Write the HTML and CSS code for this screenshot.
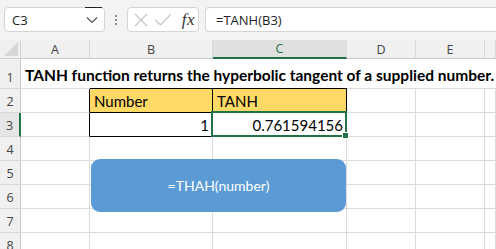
FILE: index.html
```html
<!DOCTYPE html>
<html>
<head>
<meta charset="utf-8">
<link rel="stylesheet" href="styles.css">
</head>
<body>
<div class="toolbar">
  <div class="namebox">
    <span class="ref">C3</span>
    <svg class="chev" width="12" height="8" viewBox="0 0 12 8"><path d="M1 1.5 L6 6.5 L11 1.5" fill="none" stroke="#555" stroke-width="1.2"/></svg>
  </div>
  <div class="dots"><i></i><i></i><i></i></div>
  <div class="fxbox">
    <svg class="ic" width="16" height="16" viewBox="0 0 16 16"><path d="M2 2 L14 14 M14 2 L2 14" stroke="#c4c4c4" stroke-width="1.2" fill="none"/></svg>
    <svg class="ic" width="18" height="16" viewBox="0 0 18 16"><path d="M1.5 8 L6.5 13 L16.5 2.5" stroke="#c4c4c4" stroke-width="1.2" fill="none"/></svg>
    <span class="fx">fx</span>
  </div>
  <div class="formula">=TANH(B3)</div>
</div>
<div class="sheet">
  <div class="corner"><svg width="14" height="14" viewBox="0 0 14 14"><path d="M14 0 L14 14 L0 14 Z" fill="#d6d6d6"/></svg></div>
  <div class="ch">A</div>
  <div class="ch">B</div>
  <div class="ch sel">C</div>
  <div class="ch">D</div>
  <div class="ch">E</div>
  <div class="ch"></div>

  <div class="rh">1</div>
  <div class="cell title">TANH function returns the hyperbolic tangent of a supplied number.</div>

  <div class="rh">2</div>
  <div class="cell tleft"></div>
  <div class="cell th first">Number</div>
  <div class="cell th">TANH</div>
  <div class="cell"></div>
  <div class="cell"></div>
  <div class="cell"></div>

  <div class="rh sel">3</div>
  <div class="cell tleft"></div>
  <div class="cell td num">1</div>
  <div class="cell td num active">0.761594156</div>
  <div class="cell"></div>
  <div class="cell"></div>
  <div class="cell"></div>

  <div class="rh">4</div>
  <div class="cell"></div><div class="cell"></div><div class="cell"></div><div class="cell"></div><div class="cell"></div><div class="cell"></div>
  <div class="rh">5</div>
  <div class="cell"></div><div class="cell"></div><div class="cell"></div><div class="cell"></div><div class="cell"></div><div class="cell"></div>
  <div class="rh">6</div>
  <div class="cell"></div><div class="cell"></div><div class="cell"></div><div class="cell"></div><div class="cell"></div><div class="cell"></div>
  <div class="rh">7</div>
  <div class="cell"></div><div class="cell"></div><div class="cell"></div><div class="cell"></div><div class="cell"></div><div class="cell"></div>
  <div class="rh">8</div>
  <div class="cell"></div><div class="cell"></div><div class="cell"></div><div class="cell"></div><div class="cell"></div><div class="cell"></div>

  <div class="shape">=THAH(number)</div>
</div>
</body>
</html>
```

FILE: styles.css
```css
* { box-sizing: border-box; }
html, body { margin: 0; padding: 0; background: #fff; overflow: hidden; }
body { width: 496px; height: 249px; font-family: "Open Sans", "Noto Sans", sans-serif; }

.toolbar {
  height: 40px;
  background: #f3f3f3;
  display: flex;
  align-items: flex-start;
  padding: 7px 0 0 4px;
}
.namebox {
  width: 101px;
  height: 25px;
  background: #fff;
  border: 1px solid #d4d4d4;
  border-radius: 4px;
  display: flex;
  align-items: center;
  justify-content: space-between;
  padding: 0 6px 0 7px;
  position: relative;
}
.namebox::before {
  content: "";
  position: absolute;
  top: -1px;
  right: 2px;
  width: 17px;
  height: 1px;
  background: #222;
}
.ref { font-size: 13px; color: #222; }
.dots {
  width: 22px;
  height: 25px;
  display: flex;
  flex-direction: column;
  align-items: center;
  justify-content: center;
  gap: 2px;
}
.dots i { display: block; width: 2px; height: 2px; background: #8a8a8a; }
.fxbox {
  width: 72px;
  height: 25px;
  background: #fff;
  border: 1px solid #d4d4d4;
  border-radius: 4px;
  display: flex;
  align-items: center;
  padding: 0 3px 0 5px;
  gap: 5px;
}
.fx {
  font-family: "Liberation Serif", "DejaVu Serif", serif;
  font-style: italic;
  font-size: 17px;
  color: #333;
  margin-left: auto;
  letter-spacing: 0.5px;
}
.formula {
  flex: 1;
  height: 25px;
  margin-left: 6px;
  background: #fff;
  border: 1px solid #d4d4d4;
  border-right: none;
  border-radius: 4px 0 0 4px;
  display: flex;
  align-items: center;
  padding-left: 10px;
  font-size: 13px;
  color: #222;
}

.sheet {
  position: relative;
  display: grid;
  grid-template-columns: 21px 69px 123px 134px 69px 69px 1fr;
  grid-template-rows: 19px 30px repeat(7, 24px);
  font-family: Lato, "Liberation Sans", sans-serif;
}
.corner {
  background: #f0f0f0;
  border-right: 1px solid #d0d0d0;
  border-bottom: 1px solid #d0d0d0;
  display: flex;
  align-items: flex-end;
  justify-content: flex-end;
  padding: 0 2px 2px 0;
}
.ch {
  background: #f0f0f0;
  border-right: 1px solid #d8d8d8;
  border-bottom: 1px solid #c8c8c8;
  display: flex;
  align-items: center;
  justify-content: center;
  font-family: "Open Sans", "Noto Sans", sans-serif;
  font-size: 12.5px;
  color: #444;
}
.ch.sel {
  background: #e0e0e0;
  border-bottom: 2px solid #217346;
  color: #217346;
}
.rh {
  background: #f0f0f0;
  border-right: 1px solid #c8c8c8;
  border-bottom: 1px solid #d8d8d8;
  display: flex;
  align-items: flex-end;
  justify-content: center;
  padding-bottom: 2px;
  font-family: "Open Sans", "Noto Sans", sans-serif;
  font-size: 12.5px;
  color: #444;
}
.rh.sel {
  background: #e6e6e6;
  border-right: 2px solid #217346;
}
.cell {
  border-right: 1px solid #dcdcdc;
  border-bottom: 1px solid #dcdcdc;
  font-size: 15px;
  color: #000;
  display: flex;
  align-items: flex-end;
  padding: 0 3px 2px 4px;
  white-space: nowrap;
}
.title {
  grid-column: 2 / -1;
  font-weight: 700;
  font-size: 15.5px;
  padding-bottom: 4px;
  border-right: none;
}
.tleft { border-right-color: #000; }
.th {
  background: #ffd966;
  border-right-color: #000;
  border-bottom-color: #000;
  box-shadow: 0 -1px 0 #000;
}
.td {
  border-right-color: #000;
  border-bottom-color: #000;
}
.num { justify-content: flex-end; }
.active { position: relative; }
.active::after {
  content: "";
  position: absolute;
  left: -2px;
  top: -2px;
  right: -1px;
  bottom: -1px;
  border: 2px solid #217346;
}
.active::before {
  content: "";
  position: absolute;
  right: -3px;
  bottom: -3px;
  width: 5px;
  height: 5px;
  background: #217346;
  border: 1px solid #fff;
  z-index: 2;
}
.shape {
  position: absolute;
  left: 91px;
  top: 119px;
  width: 255px;
  height: 53px;
  border-radius: 9px;
  background: #5b9bd5;
  color: #fff;
  font-family: Lato, "Liberation Sans", sans-serif;
  font-size: 14px;
  display: flex;
  align-items: center;
  justify-content: center;
}
```
